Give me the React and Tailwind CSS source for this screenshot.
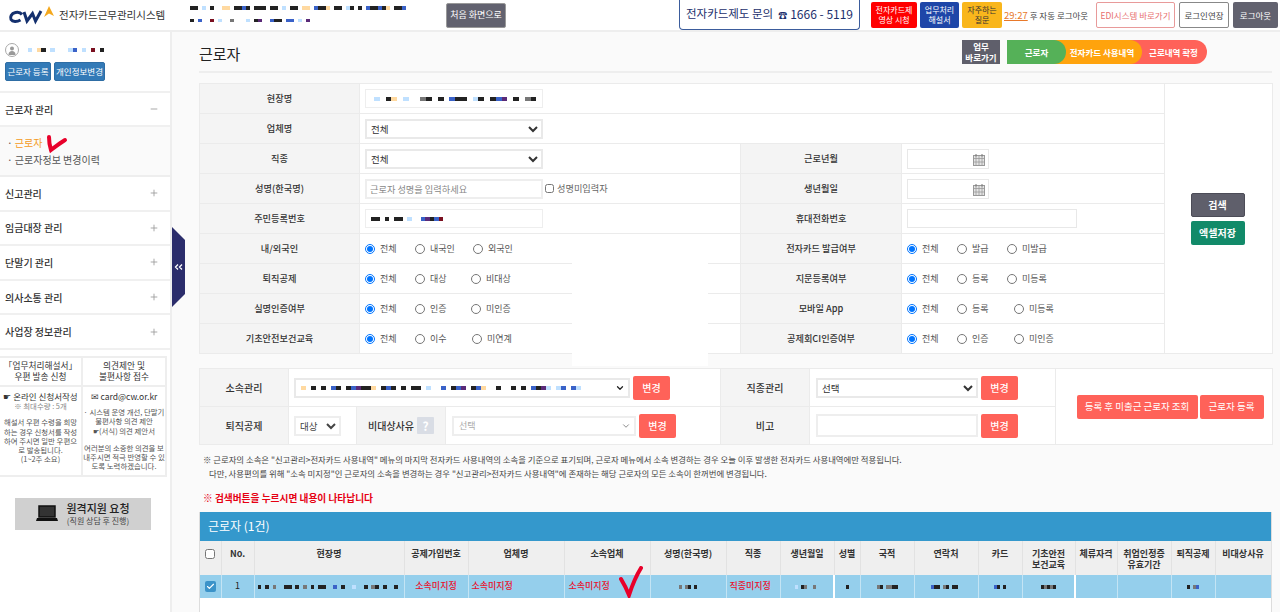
import React from "react";
import { Minus, Plus, Check, ChevronDown } from "lucide-react";

// redacted text in the reference: one cell per char
const cellColor = {
  k: "bg-[#222]",
  g: "bg-[#777]",
  b: "bg-[#3a62c8]",
  l: "bg-[#bfe0ff]",
  o: "bg-[#ffd9a0]",
  p: "bg-[#5a2a78]",
  r: "bg-[#7a1020]",
  ".": "bg-transparent",
};

const Blur = ({ p, h = "h-[4px]", w = "w-[3px]" }) => (
  <span className="inline-flex align-middle">
    {p.split("").map((c, i) => (
      <span key={i} className={`${w} ${h} ${cellColor[c]}`} />
    ))}
  </span>
);

const Radio = ({ name, label, width, checked }) => (
  <label className={`inline-flex items-center gap-[5px] ${width}`}>
    <input
      type="radio"
      name={name}
      defaultChecked={checked}
      className="w-[10px] h-[10px] m-0"
    />
    <span>{label}</span>
  </label>
);

const Calendar = () => (
  <svg width="12" height="12" viewBox="0 0 12 12" className="absolute right-[3px] top-[4px]">
    <rect x="0.5" y="1.5" width="11" height="10" fill="#e4e4e4" stroke="#999" />
    <path d="M0.5 4.5H11.5M3 1.5V11.5M6 1.5V11.5M9 1.5V11.5M0.5 8H11.5" stroke="#999" strokeWidth="0.8" />
    <path d="M3 0V2.5M9 0V2.5" stroke="#777" />
  </svg>
);

const DateInput = () => (
  <div className="relative w-[82px] h-[20px] border border-[#e8e8e8] bg-white">
    <Calendar />
  </div>
);

const Label = ({ children }) => (
  <td className="bg-[#f4f4f4] border border-[#ebebeb] text-center font-medium text-[#333]">{children}</td>
);

const Value = ({ children, ...rest }) => (
  <td className="border border-[#ebebeb] pl-[5px]" {...rest}>
    {children}
  </td>
);

const RadioRow = ({ name, items }) => (
  <div className="flex items-center text-[9px] text-[#555]">
    {items.map(([label, width], i) => (
      <Radio key={label} name={name} label={label} width={width} checked={i === 0} />
    ))}
  </div>
);

const selectBox = "h-[20px] border-2 border-[#e9e9e9] bg-white text-[9.5px] text-[#333] pl-0";

const menus = ["신고관리", "임금대장 관리", "단말기 관리", "의사소통 관리", "사업장 정보관리"];

const Sidebar = () => (
  <aside className="w-[172px] shrink-0 border-r-2 border-[#eee] bg-white text-[#333]">
    <div className="h-[61px] border-b-2 border-[#f0f0f0] pt-[11px] pl-[5px]">
      <div className="flex items-center gap-[4px] h-[14px]">
        <span className="w-[14px] h-[14px] rounded-full border border-[#aaa] flex items-center justify-center">
          <svg width="8" height="9" viewBox="0 0 8 9">
            <circle cx="4" cy="2.5" r="2" fill="#999" />
            <path d="M0.5 9C0.5 6 2 5 4 5C6 5 7.5 6 7.5 9Z" fill="#999" />
          </svg>
        </span>
        <Blur p=".l.ok.l...lb.l.r.k" w="w-[4.5px]" />
      </div>
      <div className="flex gap-[3px] mt-[5px]">
        <button className="w-[46px] h-[19px] bg-[#337ab7] border border-[#2e6da4] rounded-[2px] text-white text-[8.5px]">
          근로자 등록
        </button>
        <button className="w-[51px] h-[19px] bg-[#337ab7] border border-[#2e6da4] rounded-[2px] text-white text-[8.5px]">
          개인정보변경
        </button>
      </div>
    </div>
    <div className="h-[34px] flex items-center justify-between pl-[5px] pr-[11px] border-b-2 border-[#f0f0f0] text-[10px] font-medium">
      근로자 관리
      <Minus size={10} className="text-[#999]" />
    </div>
    <div className="h-[50px] bg-[#fafafa] border-b-2 border-[#eee] pl-[7px] pt-[7px] text-[10px] leading-[17px] text-[#555]">
      <div>
        · <span className="text-[#f59a23]">근로자</span>
      </div>
      <div>· 근로자정보 변경이력</div>
    </div>
    {menus.map((m) => (
      <div
        key={m}
        className="h-[34.6px] flex items-center justify-between pl-[5px] pr-[11px] border-b-2 border-[#f0f0f0] text-[10px] font-medium"
      >
        {m}
        <Plus size={10} className="text-[#999]" />
      </div>
    ))}
    <table className="mt-[6px] w-[167px] table-fixed border-collapse text-center text-[7.4px] text-[#555] leading-[9.2px]">
      <tbody>
        <tr className="h-[29px] text-[8.7px] leading-[11px] text-[#333]">
          <td className="w-[82px] border-2 border-l-0 border-[#eee]">
            「업무처리해설서」
            <br />
            우편 발송 신청
          </td>
          <td className="border-2 border-[#eee]">
            의견제안 및
            <br />
            불편사항 접수
          </td>
        </tr>
        <tr className="h-[90px] align-top whitespace-nowrap">
          <td className="border-2 border-l-0 border-[#eee] pt-[5px]">
            <div className="text-[8.5px] text-[#333]">☛ 온라인 신청서작성</div>
            <div className="text-[#888] mb-[7px]">※ 최대수량 : 5개</div>
            해설서 우편 수령을 희망
            <br />
            하는 경우 신청서를 작성
            <br />
            하여 주시면 일반 우편으
            <br />로 발송됩니다.
            <br />
            (1~2주 소요)
          </td>
          <td className="border-2 border-[#eee] pt-[5px]">
            <div className="text-[8.5px] text-[#333] mb-[6px]">✉ card@cw.or.kr</div>
            · 시스템 운영 개선, 단말기
            <br />
            불편사항 의견 제안
            <br />
            ☛(서식) 의견 제안서
            <div className="mt-[8px]">
              여러분의 소중한 의견을 보
              <br />
              내주시면 적극 반영할 수 있
              <br />
              도록 노력하겠습니다.
            </div>
          </td>
        </tr>
      </tbody>
    </table>
    <button className="ml-[15px] mt-[21px] w-[136px] h-[32px] bg-[#d0d0d0] flex items-center justify-center gap-[8px] text-[#222]">
      <svg width="22" height="17" viewBox="0 0 22 17">
        <rect x="3" y="1" width="16" height="11" fill="#333" stroke="#111" strokeWidth="1.5" />
        <path d="M1 13H21L22 16H0Z" fill="#111" />
      </svg>
      <span className="flex flex-col">
        <span className="text-[11px] leading-[14px] font-medium">원격지원 요청</span>
        <span className="text-[8px] leading-[11px] text-[#444]">(직원 상담 후 진행)</span>
      </span>
    </button>
  </aside>
);

const Header = () => (
  <header className="h-[32px] border-b-2 border-[#eee] bg-white flex items-center">
    <svg width="47" height="19" viewBox="0 0 47 19" className="ml-[8px] shrink-0">
      <path d="M14 8.5C12.5 6.5 10 6 7.5 6.5C3 7.5 2 11 3 13.5C4.5 16 9 16 12.5 14" fill="none" stroke="#14306e" strokeWidth="3" />
      <path d="M16 6L19 15L24.5 7.5L27.5 15L33 5" fill="none" stroke="#14306e" strokeWidth="3" />
      <path d="M41 0L46 10L41 7.5L36 11Z" fill="#f4a81d" />
    </svg>
    <span className="ml-[4px] w-[131px] shrink-0 text-[10.5px] text-[#333]">전자카드근무관리시스템</span>
    <div className="w-[256px] shrink-0 flex flex-col gap-[9px] -mt-[2px]">
      <Blur p="kk.l.k..oo.kkbk.kkk.kk.l.kk.oo.bkko.kk.lk.k.bkkbko.kkb" w="w-[4px]" />
      <Blur p="k.b..r.l..g...l.kp..bkk.bb.l.p" w="w-[4px]" h="h-[3px]" />
    </div>
    <button className="w-[60px] h-[25px] shrink-0 bg-[#62626f] border border-[#999] rounded-[2px] text-white text-[9px]">
      처음 화면으로
    </button>
    <div className="ml-[173px] -mt-[2px] w-[181px] h-[32px] shrink-0 border border-t-0 border-[#3b5c9c] rounded-b-[4px] flex items-center justify-center gap-[5px] text-[#1c2f6c] text-[11.5px]">
      전자카드제도 문의
      <span className="text-[12px]">
        <span className="text-[9px] mr-[3px]">☎</span>1666 - 5119
      </span>
    </div>
    <div className="ml-[11px] flex gap-[3px] text-[8px] leading-[10px] text-center">
      <button className="w-[46px] h-[26px] bg-[#f00] rounded-[2px] text-white">
        전자카드제
        <br />
        영상 시청
      </button>
      <button className="w-[39px] h-[26px] bg-[#1e46a8] rounded-[2px] text-white">
        업무처리
        <br />
        해설서
      </button>
      <button className="w-[40px] h-[26px] bg-[#f9b61c] rounded-[2px] text-[#333]">
        자주하는
        <br />
        질문
      </button>
    </div>
    <span className="ml-[2px] w-[92px] shrink-0 text-[8.5px] text-[#444]">
      <span className="text-[#e8792a] underline text-[9.5px]">29:27</span> 후 자동 로그아웃
    </span>
    <button className="w-[79px] h-[26px] shrink-0 border border-[#e89a9a] rounded-[2px] text-[#e87070] text-[8.5px]">
      EDI시스템 바로가기
    </button>
    <button className="ml-[4px] w-[50px] h-[26px] shrink-0 border border-[#888] rounded-[2px] text-[#444] text-[8.5px]">
      로그인연장
    </button>
    <button className="ml-[4px] w-[45px] h-[26px] shrink-0 bg-[#62626f] rounded-[2px] text-white text-[8.5px]">
      로그아웃
    </button>
  </header>
);

const TitleRow = () => (
  <div className="flex items-center h-[24px] pr-[73px]">
    <h1 className="text-[15px] text-[#222] flex-1 mt-[5px]">근로자</h1>
    <div className="w-[38px] h-[24px] bg-[#5f5f6b] text-white text-[8.5px] font-bold leading-[11px] flex items-center justify-center text-center">
      업무
      <br />
      바로가기
    </div>
    <div className="ml-[7px] flex text-white text-[8.5px] font-bold">
      <div className="relative z-20 w-[59px] h-[24px] bg-[#55b158] rounded-l-[2px] rounded-r-full flex items-center justify-center">
        근로자
      </div>
      <div className="relative z-10 -ml-[12px] w-[88px] h-[24px] bg-[#ffa30d] rounded-r-full flex items-center justify-center pl-[8px]">
        전자카드 사용내역
      </div>
      <div className="-ml-[12px] w-[77px] h-[24px] bg-[#ff6259] rounded-r-full flex items-center justify-center pl-[10px]">
        근로내역 확정
      </div>
    </div>
  </div>
);

const SearchTable = () => (
  <table className="mt-[10px] w-[1073px] table-fixed border-collapse bg-white text-[9.2px]">
    <colgroup>
      <col className="w-[160px]" />
      <col className="w-[381px]" />
      <col className="w-[161px]" />
      <col className="w-[263px]" />
      <col className="w-[108px]" />
    </colgroup>
    <tbody className="[&>tr]:h-[30px]">
      <tr>
        <Label>현장명</Label>
        <Value colSpan={3}>
          <div className="w-[178px] h-[19px] border border-[#eee] flex items-center pl-[8px]">
            <Blur p="l.ko.l..gk.k.bkk.lk.kbp.k.gk" w="w-[5.8px]" />
          </div>
        </Value>
        <td rowSpan={9} className="border border-[#ebebeb] align-middle">
          <div className="flex flex-col items-center gap-[4px] pr-[2px]">
            <button className="w-[54px] h-[24px] bg-[#5f5f6b] border border-[#4c4c57] rounded-[2px] text-white font-bold text-[10px]">
              검색
            </button>
            <button className="w-[54px] h-[24px] bg-[#128a69] rounded-[2px] text-white font-bold text-[10px]">
              엑셀저장
            </button>
          </div>
        </td>
      </tr>
      <tr>
        <Label>업체명</Label>
        <Value colSpan={3}>
          <select className={`${selectBox} w-[178px]`}>
            <option>전체</option>
          </select>
        </Value>
      </tr>
      <tr>
        <Label>직종</Label>
        <Value>
          <select className={`${selectBox} w-[178px]`}>
            <option>전체</option>
          </select>
        </Value>
        <Label>근로년월</Label>
        <Value>
          <DateInput />
        </Value>
      </tr>
      <tr>
        <Label>성명(한국명)</Label>
        <Value>
          <div className="flex items-center gap-[2px]">
            <input
              placeholder="근로자 성명을 입력하세요"
              className="w-[178px] h-[20px] border-2 border-[#eee] pl-[3px] text-[9.2px] placeholder:text-[#888]"
            />
            <label className="flex items-center gap-[3px] text-[#666]">
              <input type="checkbox" className="w-[9px] h-[9px] m-0" />
              성명미입력자
            </label>
          </div>
        </Value>
        <Label>생년월일</Label>
        <Value>
          <DateInput />
        </Value>
      </tr>
      <tr>
        <Label>주민등록번호</Label>
        <Value>
          <div className="w-[178px] h-[19px] border border-[#eee] flex items-center pl-[5px]">
            <Blur p="kk.k.kk.l..bpkbr" w="w-[4.5px]" />
          </div>
        </Value>
        <Label>휴대전화번호</Label>
        <Value>
          <div className="w-[170px] h-[19px] border border-[#e8e8e8]" />
        </Value>
      </tr>
      <tr>
        <Label>내/외국인</Label>
        <Value>
          <RadioRow name="a1" items={[["전체", "w-[50px]"], ["내국인", "w-[58px]"], ["외국인", "w-[50px]"]]} />
        </Value>
        <Label>전자카드 발급여부</Label>
        <Value>
          <RadioRow name="b1" items={[["전체", "w-[50px]"], ["발급", "w-[50px]"], ["미발급", "w-[50px]"]]} />
        </Value>
      </tr>
      <tr>
        <Label>퇴직공제</Label>
        <Value>
          <RadioRow name="a2" items={[["전체", "w-[50px]"], ["대상", "w-[56px]"], ["비대상", "w-[50px]"]]} />
        </Value>
        <Label>지문등록여부</Label>
        <Value>
          <RadioRow name="b2" items={[["전체", "w-[50px]"], ["등록", "w-[50px]"], ["미등록", "w-[50px]"]]} />
        </Value>
      </tr>
      <tr>
        <Label>실명인증여부</Label>
        <Value>
          <RadioRow name="a3" items={[["전체", "w-[50px]"], ["인증", "w-[56px]"], ["미인증", "w-[50px]"]]} />
        </Value>
        <Label>모바일 App</Label>
        <Value>
          <RadioRow name="b3" items={[["전체", "w-[50px]"], ["등록", "w-[57px]"], ["미등록", "w-[50px]"]]} />
        </Value>
      </tr>
      <tr>
        <Label>기초안전보건교육</Label>
        <Value>
          <RadioRow name="a4" items={[["전체", "w-[50px]"], ["이수", "w-[57px]"], ["미연계", "w-[50px]"]]} />
        </Value>
        <Label>공제회CI인증여부</Label>
        <Value>
          <RadioRow name="b4" items={[["전체", "w-[50px]"], ["인증", "w-[57px]"], ["미인증", "w-[50px]"]]} />
        </Value>
      </tr>
    </tbody>
  </table>
);

const ChangeBtn = () => (
  <button className="w-[37px] h-[24px] shrink-0 bg-[#ff6259] rounded-[2px] text-white text-[10px] font-medium">
    변경
  </button>
);

const AssignTable = () => (
  <table className="mt-[14px] w-[1073px] table-fixed border-collapse bg-white text-[10px]">
    <colgroup>
      <col className="w-[89px]" />
      <col className="w-[68px]" />
      <col className="w-[89px]" />
      <col className="w-[275px]" />
      <col className="w-[89px]" />
      <col className="w-[246px]" />
      <col className="w-[217px]" />
    </colgroup>
    <tbody>
      <tr className="h-[38px]">
        <Label>소속관리</Label>
        <td colSpan={3} className="border border-[#ebebeb] pl-[5px]">
          <div className="flex items-center gap-[3px]">
            <div className="w-[336px] h-[20px] border-2 border-[#e9e9e9] flex items-center justify-between pl-[5px] pr-[3px]">
              <Blur p="o.k.k.bk.kbpkko.kbk.k.kk.l..b.kbp.kbo..k..k.k.bkpl.lb.bl" w="w-[5px]" />
              <ChevronDown size={10} strokeWidth={3} className="text-[#222]" />
            </div>
            <ChangeBtn />
          </div>
        </td>
        <Label>직종관리</Label>
        <td className="border border-[#ebebeb] pl-[6px]">
          <div className="flex items-center gap-[3px]">
            <select className={`${selectBox} w-[162px]`}>
              <option>선택</option>
            </select>
            <ChangeBtn />
          </div>
        </td>
        <td rowSpan={2} className="border border-[#ebebeb]">
          <div className="flex justify-center gap-[2px] pl-[12px] text-white text-[9.5px]">
            <button className="w-[121px] h-[24px] bg-[#ff6259] rounded-[2px]">등록 후 미출근 근로자 조회</button>
            <button className="w-[64px] h-[24px] bg-[#ff6259] rounded-[2px]">근로자 등록</button>
          </div>
        </td>
      </tr>
      <tr className="h-[38px]">
        <Label>퇴직공제</Label>
        <td className="border border-[#ebebeb] pl-[5px]">
          <select className="w-[47px] h-[20px] border-2 border-[#eee] bg-white text-[9.5px] text-[#444] pl-0">
            <option>대상</option>
          </select>
        </td>
        <td className="bg-[#f4f4f4] border border-[#ebebeb]">
          <div className="flex items-center justify-center gap-[3px] font-medium text-[#333]">
            비대상사유
            <span className="w-[17px] h-[17px] bg-[#d9dde5] rounded-[1px] flex items-center justify-center text-white font-bold text-[12px]">
              ?
            </span>
          </div>
        </td>
        <td className="border border-[#ebebeb] pl-[6px]">
          <div className="flex items-center gap-[3px]">
            <div className="w-[184px] h-[20px] border-2 border-[#eee] flex items-center justify-between pl-[5px] pr-[3px] text-[9px] text-[#aaa]">
              선택
              <ChevronDown size={10} className="text-[#777]" />
            </div>
            <ChangeBtn />
          </div>
        </td>
        <Label>비고</Label>
        <td className="border border-[#ebebeb] pl-[6px]">
          <div className="flex items-center gap-[3px]">
            <div className="w-[162px] h-[23px] border-2 border-[#eee]" />
            <ChangeBtn />
          </div>
        </td>
      </tr>
    </tbody>
  </table>
);

const columns = [
  ["", "w-[21px]"],
  ["No.", "w-[33px]"],
  ["현장명", "w-[150px]"],
  ["공제가입번호", "w-[64px]"],
  ["업체명", "w-[96px]"],
  ["소속업체", "w-[86px]"],
  ["성명(한국명)", "w-[76px]"],
  ["직종", "w-[54px]"],
  ["생년월일", "w-[54px]"],
  ["성별", "w-[26px]"],
  ["국적", "w-[54px]"],
  ["연락처", "w-[64px]"],
  ["카드", "w-[44px]"],
  ["기초안전\n보건교육", "w-[53px]"],
  ["체류자격", "w-[42px]"],
  ["취업인정증\n유효기간", "w-[54px]"],
  ["퇴직공제", "w-[44px]"],
  ["비대상사유", "w-[56px]"],
];

const redCell = "border-r border-[#c4e4f4] text-[#e8112d] font-medium";
const rowCell = "border-r border-[#c4e4f4] text-center";

const WorkerTable = () => (
  <section className="mt-[6px] w-[1073px] border-x border-[#ddd] bg-white">
    <div className="h-[29px] bg-[#3498cc] flex items-center pl-[8px] text-white text-[12px]">근로자 (1건)</div>
    <table className="w-[1071px] table-fixed border-collapse text-[9px]">
      <colgroup>
        {columns.map(([name, width]) => (
          <col key={name} className={width} />
        ))}
      </colgroup>
      <thead>
        <tr className="h-[34px] bg-[#efefef] text-[#333]">
          {columns.map(([name], i) => (
            <th key={name} className="border-r border-[#e2e2e2] align-top pt-[7px] font-bold leading-[11px] whitespace-pre-line overflow-hidden">
              {i === 0 ? <input type="checkbox" className="w-[10px] h-[10px] m-0 mt-[1px]" /> : name}
            </th>
          ))}
        </tr>
      </thead>
      <tbody>
        <tr className="h-[23px] bg-[#95cfec] text-[#222]">
          <td className={rowCell}>
            <span className="mx-auto w-[11px] h-[11px] bg-[#3b93c9] rounded-[2px] flex items-center justify-center">
              <Check size={9} strokeWidth={3} className="text-white" />
            </span>
          </td>
          <td className={rowCell}>1</td>
          <td className={`${rowCell} text-left pl-[3px]`}>
            <Blur p="k.k.g..kk.k.g.k.kk..b.k..l..k.gk.k..k" w="w-[3.8px]" />
          </td>
          <td className={`${redCell} text-center`}>소속미지정</td>
          <td className={`${redCell} pl-[3px]`}>소속미지정</td>
          <td className={`${redCell} pl-[4px]`}>소속미지정</td>
          <td className={rowCell}>
            <Blur p="g.gk.k" />
          </td>
          <td className={`${redCell} pl-[3px]`}>직종미지정</td>
          <td className="border-r-2 border-white text-center">
            <Blur p="l.kg..g." />
          </td>
          <td className={rowCell}>
            <Blur p="k" />
          </td>
          <td className={rowCell}>
            <Blur p="gk.ggkk" />
          </td>
          <td className={rowCell}>
            <Blur p="bkk.gk.kk." />
          </td>
          <td className={rowCell}>
            <Blur p="bk.k" />
          </td>
          <td className="border-r-2 border-white text-center">
            <Blur p="kgkgk" />
          </td>
          <td className={rowCell} />
          <td className={rowCell} />
          <td className={rowCell}>
            <Blur p="k.gb" />
          </td>
          <td />
        </tr>
      </tbody>
    </table>
    <div className="h-[20px]" />
  </section>
);

const App = () => (
  <div className="relative w-[1280px] h-[612px] overflow-hidden bg-[#fafafa] font-['Noto_Sans_CJK_KR',sans-serif]">
    <Header />
    <div className="flex">
      <Sidebar />
      <main className="flex-1 pl-[27px] pt-[8px]">
        <TitleRow />
        <hr className="mt-[7px] mr-[8px] border-t-2 border-[#eee]" />
        <SearchTable />
        <AssignTable />
        <p className="mt-[7px] ml-[4px] text-[8.4px] leading-[14px] text-[#444]">
          ※ 근로자의 소속은 "신고관리&gt;전자카드 사용내역" 메뉴의 마지막 전자카드 사용내역의 소속을 기준으로 표기되며, 근로자 메뉴에서 소속 변경하는 경우 오늘 이후 발생한 전자카드 사용내역에만 적용됩니다.
          <br />
          <span className="ml-[6px]">
            다만, 사용편의를 위해 "소속 미지정"인 근로자의 소속을 변경하는 경우 "신고관리&gt;전자카드 사용내역"에 존재하는 해당 근로자의 모든 소속이 한꺼번에 변경됩니다.
          </span>
        </p>
        <p className="mt-[11px] ml-[4px] text-[9.7px] font-bold text-[#e60012]">※ 검색버튼을 누르시면 내용이 나타납니다</p>
        <WorkerTable />
      </main>
    </div>

    {/* white patch left over the form in the capture */}
    <div className="absolute left-[572px] top-[263px] w-[136px] h-[103px] bg-white" />

    {/* sidebar collapse handle */}
    <div className="absolute left-[172px] top-[227px] w-[13px] h-[80px]">
      <svg width="13" height="80" viewBox="0 0 13 80">
        <path d="M0 0L13 13V67L0 80Z" fill="#2b2d6b" />
        <path d="M6 37.5L3.5 40L6 42.5M10 37.5L7.5 40L10 42.5" fill="none" stroke="#fff" strokeWidth="1.3" />
      </svg>
    </div>

    {/* hand drawn red ticks */}
    <svg width="22" height="20" viewBox="0 0 22 20" className="absolute left-[46px] top-[134px]">
      <path d="M3 3C3 8 4 13 5 16C9 13 14 9 19 6" fill="none" stroke="#e8002a" strokeWidth="4" strokeLinecap="round" />
    </svg>
    <svg width="24" height="32" viewBox="0 0 24 32" className="absolute left-[619px] top-[566px]">
      <path d="M2 13C5 18 8 24 10 29C13 20 17 10 22 2" fill="none" stroke="#e8002a" strokeWidth="4" strokeLinecap="round" />
    </svg>
  </div>
);

export default App;
